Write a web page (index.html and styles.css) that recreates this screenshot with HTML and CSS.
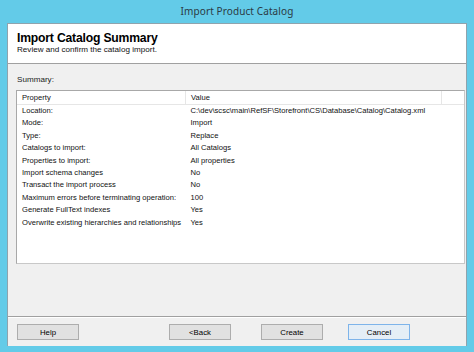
FILE: index.html
```html
<!DOCTYPE html>
<html>
<head>
<meta charset="utf-8">
<link rel="stylesheet" href="styles.css">
</head>
<body>
<div class="window">
  <div class="titlebar">Import Product Catalog</div>
  <div class="dialog">
    <div class="header">
      <div class="h-title">Import Catalog Summary</div>
      <div class="h-sub">Review and confirm the catalog import.</div>
    </div>
    <div class="body">
      <div class="label">Summary:</div>
      <div class="grid">
        <table>
          <thead>
            <tr><th class="c1">Property</th><th class="c2">Value</th><th class="c3"></th></tr>
          </thead>
          <tbody>
            <tr><td>Location:</td><td colspan="2">C:\dev\scsc\main\RefSF\Storefront\CS\Database\Catalog\Catalog.xml</td></tr>
            <tr><td>Mode:</td><td colspan="2">Import</td></tr>
            <tr><td>Type:</td><td colspan="2">Replace</td></tr>
            <tr><td>Catalogs to import:</td><td colspan="2">All Catalogs</td></tr>
            <tr><td>Properties to import:</td><td colspan="2">All properties</td></tr>
            <tr><td>Import schema changes</td><td colspan="2">No</td></tr>
            <tr><td>Transact the import process</td><td colspan="2">No</td></tr>
            <tr><td>Maximum errors before terminating operation:</td><td colspan="2">100</td></tr>
            <tr><td>Generate FullText indexes</td><td colspan="2">Yes</td></tr>
            <tr><td>Overwrite existing hierarchies and relationships</td><td colspan="2">Yes</td></tr>
          </tbody>
        </table>
      </div>
    </div>
    <div class="footer">
      <button class="btn help">Help</button>
      <button class="btn back">&lt;Back</button>
      <button class="btn create">Create</button>
      <button class="btn cancel">Cancel</button>
    </div>
  </div>
</div>
</body>
</html>
```

FILE: styles.css
```css
html, body {
  margin: 0;
  padding: 0;
}
body {
  width: 474px;
  height: 352px;
  background: #63cbe8;
  overflow: hidden;
  font-family: "Liberation Sans", Arial, sans-serif;
}
.window {
  display: flex;
  flex-direction: column;
  height: 352px;
}
.titlebar {
  height: 23px;
  line-height: 23px;
  text-align: center;
  font-family: "Noto Sans", "Open Sans", sans-serif;
  font-size: 10px;
  color: #2b3a44;
  letter-spacing: 0.1px;
}
.dialog {
  margin: 0 7px;
  height: 323px;
  box-sizing: border-box;
  background: #f0f0f0;
  border: 1px solid #8fa3ad;
  border-bottom: none;
  display: flex;
  flex-direction: column;
}
.header {
  background: #fff;
  height: 40px;
  border-bottom: 1px solid #a0a0a0;
  padding: 7px 0 0 9px;
  box-sizing: border-box;
}
.h-title {
  font-weight: bold;
  font-size: 12.2px;
  line-height: 14px;
  color: #000;
  letter-spacing: -0.2px;
}
.h-sub {
  font-size: 8.1px;
  line-height: 9px;
  color: #111;
}
.body {
  padding: 11px 0 0 8px;
  flex: 1;
}
.label {
  font-size: 8.1px;
  line-height: 10px;
  color: #222;
  margin-left: 1px;
}
.grid {
  margin-top: 5px;
  width: 449px;
  height: 174px;
  box-sizing: border-box;
  background: #fff;
  border: 1px solid #a8a8a8;
  border-right-color: #c8c8c8;
  border-bottom-color: #c8c8c8;
}
table {
  border-collapse: collapse;
  width: 100%;
  table-layout: fixed;
  font-size: 7.6px;
  color: #111;
}
th {
  font-weight: normal;
  text-align: left;
  height: 13px;
  padding: 0 0 0 5px;
  border-bottom: 1px solid #e6e6e6;
  border-right: 1px solid #e6e6e6;
}
th.c1 { width: 163px; }
th.c3 { width: 17px; border-right: none; }
td {
  height: 12.4px;
  line-height: 12.4px;
  padding: 0 0 0 5px;
  white-space: nowrap;
  overflow: hidden;
}
.footer {
  height: 30px;
  border-top: 1px solid #a0a0a0;
  box-shadow: inset 0 1px 0 #fff;
  display: flex;
  align-items: flex-start;
  padding: 7px 0 0 9px;
  box-sizing: border-box;
}
.btn {
  width: 62px;
  height: 16px;
  box-sizing: border-box;
  padding: 0;
  margin: 0;
  background: #e1e1e1;
  border: 1px solid #adadad;
  font-family: "Liberation Sans", Arial, sans-serif;
  font-size: 7.8px;
  color: #000;
}
.back { margin-left: 90px; }
.create { margin-left: 30px; }
.cancel { margin-left: 25px; border-color: #7eb4ea; background: #e5eef6; }
```
